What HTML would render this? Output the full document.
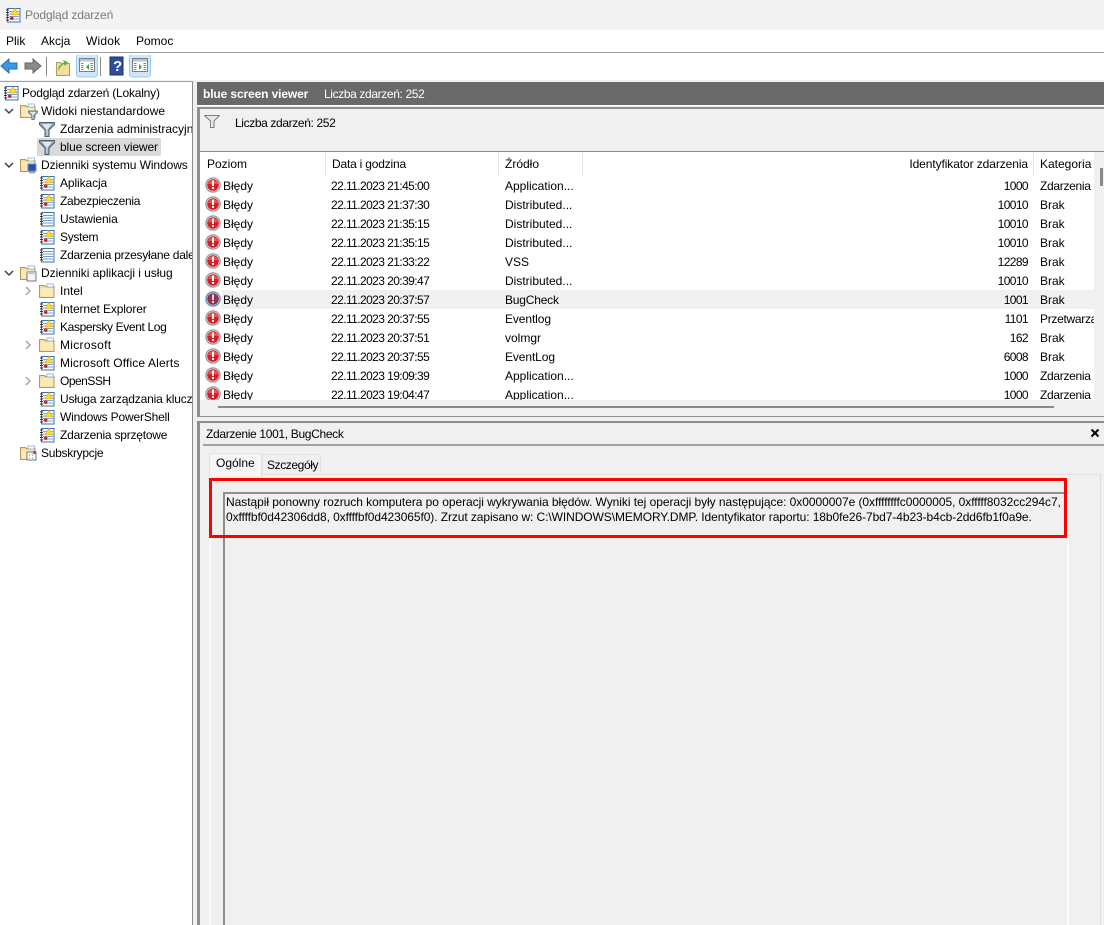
<!DOCTYPE html>
<html lang="pl"><head><meta charset="utf-8"><title>Podgląd zdarzeń</title>
<style>
html,body{margin:0;padding:0;background:#fff}
body{width:1104px;height:925px;position:relative;overflow:hidden;font:12px "Liberation Sans",sans-serif;color:#000}
.a{position:absolute}
.t{position:absolute;white-space:nowrap;line-height:16px;height:16px}
.r{text-align:right}
.d{letter-spacing:-.58px}
.n{letter-spacing:-.6px}
.z{letter-spacing:-.3px}
svg.i{position:absolute;width:16px;height:16px;overflow:visible}
.clip{position:absolute;overflow:hidden}
</style></head><body>
<svg width="0" height="0" style="position:absolute">
<defs>
<symbol id="log" viewBox="0 0 16 16"><rect x="2.500" y="1.500" width="12.500" height="13.500" fill="#fff" stroke="#3f6fae"/><path d="M4 4.500h10M4 7h10M4 9.500h10M4 12h10" stroke="#7ea6d4"/><path d="M1 3h3M1 5.500h3M1 8h3M1 10.500h3M1 13h3" stroke="#333"/><path d="M10 1l4 7H6z" fill="#f8d92e" stroke="#c9a020" stroke-width=".5"/><rect x="5" y="9.500" width="3.500" height="3.500" rx="1.700" fill="#c8242c"/></symbol>
<symbol id="logp" viewBox="0 0 16 16"><rect x="2.500" y="1.500" width="12.500" height="13.500" fill="#fff" stroke="#3f6fae"/><path d="M4 4.500h10M4 7h10M4 9.500h10M4 12h10" stroke="#6d9bd0"/><path d="M1 3h3M1 5.500h3M1 8h3M1 10.500h3M1 13h3" stroke="#333"/></symbol>
<symbol id="fold" viewBox="0 0 16 16"><path d="M.5 2.500h5l1 1h8.500v11H.5z" fill="#f6dd9c" stroke="#b3975a"/><path d="M8 1h6.500v3H8z" fill="#fff" stroke="#7ea6d4" stroke-width=".7"/><path d="M1.500 5h13v8.500h-13z" fill="#fbe9b7"/></symbol>
<symbol id="filt" viewBox="0 0 16 16"><path d="M.5 1.500h15v2L10 9v6.500H6V9L.5 3.500z" fill="#8fa5b5" stroke="#4d6272"/><path d="M3 3h10L8.500 8.500v6H7.500V8.500z" fill="#dfe8ee"/></symbol>
<symbol id="err" viewBox="0 0 16 16"><circle cx="8" cy="8" r="7.800" fill="#9c9c9c"/><circle cx="8" cy="8" r="6.400" fill="#e8e8e8"/><circle cx="8" cy="8" r="5.800" fill="#d61f28"/><path d="M3 7a5 3.800 0 0 1 10 0z" fill="#e9565c"/><rect x="7" y="3.500" width="2" height="5.500" fill="#fff"/><rect x="7" y="10" width="2" height="2" fill="#fff"/></symbol>
<symbol id="errs" viewBox="0 0 16 16"><circle cx="8" cy="8" r="7.800" fill="#6e93b8"/><circle cx="8" cy="8" r="6.400" fill="#c5d4e2"/><circle cx="8" cy="8" r="5.800" fill="#93344f"/><rect x="7" y="3.500" width="2" height="5.500" fill="#dcdce8"/><rect x="7" y="10" width="2" height="2" fill="#dcdce8"/></symbol>
<symbol id="gt" viewBox="0 0 10 10"><path d="M3 1l4 4-4 4" fill="none" stroke="#a6a6a6" stroke-width="1.500"/></symbol>
<symbol id="dn" viewBox="0 0 10 10"><path d="M1 3l4 4 4-4" fill="none" stroke="#404040" stroke-width="1.500"/></symbol>
<symbol id="win" viewBox="0 0 18 18"><rect x="1.500" y="2.500" width="15" height="13" fill="#fff" stroke="#708090"/><rect x="2" y="3" width="14" height="2.500" fill="#b8c6d4"/><path d="M3 7.500h2.500M3 9.500h2.500M3 11.500h2.500M3 13.500h2.500M12.500 7.500H15M12.500 9.500H15M12.500 11.500H15M12.500 13.500H15" stroke="#4a90d9"/></symbol>
</defs></svg>

<!-- title bar -->
<div class="a" style="left:0;top:0;width:1104px;height:30px;background:#f3f3f3"></div>
<svg class="i" style="left:5px;top:7px"><use href="#log"/></svg>
<div class="t" style="left:25px;top:7px;color:#7a7a7a;letter-spacing:-.13px">Podgląd zdarzeń</div>
<!-- menu -->
<div class="t" style="left:6px;top:33px">Plik</div>
<div class="t" style="left:41px;top:33px">Akcja</div>
<div class="t" style="left:86px;top:33px;letter-spacing:.2px">Widok</div>
<div class="t" style="left:136px;top:33px">Pomoc</div>
<div class="a" style="left:0;top:52px;width:1104px;height:1px;background:#a0a0a0"></div>
<!-- toolbar -->
<svg class="a" style="left:0;top:55px" width="190" height="24" viewBox="0 0 190 24">
<path d="M1 11l8-7v4h8v6H9v4z" fill="#3b9be0" stroke="#1f70b5"/>
<path d="M41 11l-8-7v4h-8v6h8v4z" fill="#8a8a8a" stroke="#666"/>
<path d="M46.500 2v19" stroke="#888"/>
<path d="M56.500 7.500h4l1 1h8v12h-13z" fill="#f5dc98" stroke="#b79a5a"/>
<path d="M58 16c0-5 3-7 6-8l-1-3 5 2-3 4-1-2c-2 1-4 3-6 7z" fill="#4fb83e"/>
<rect x="76.500" y="-1" width="21" height="23" rx="3" fill="#cfe6fb" stroke="#99ccf5"/>
<path d="M100.500 2v19" stroke="#888"/>
<rect x="110" y="2" width="13" height="18" fill="#2d4f9e" stroke="#1c2f66"/>
<rect x="129.500" y="-1" width="21" height="23" rx="3" fill="#cfe6fb" stroke="#99ccf5"/>
<text x="113" y="16" font-family="Liberation Sans" font-size="15" font-weight="bold" fill="#fff">?</text>
</svg>
<svg class="a" style="left:78px;top:56px" width="18" height="18"><use href="#win"/><path d="M8 9l3-3v6z" fill="#2fa84f" transform="translate(0 2)"/></svg>
<svg class="a" style="left:131px;top:56px" width="18" height="18"><use href="#win"/><path d="M11 9L8 6v6z" fill="#2fa84f" transform="translate(0 2)"/></svg>
<div class="a" style="left:0;top:80px;width:1104px;height:845px;background:#f0f0f0"></div>

<!-- left tree -->
<div class="a" style="left:0;top:82px;width:192px;height:843px;background:#fff"></div>
<div class="a" style="left:192px;top:82px;width:1px;height:843px;background:#8a8a8a"></div>
<div class="a" style="left:0;top:81px;width:193px;height:1px;background:#a0a0a0"></div>
<div class="a" style="left:37px;top:138px;width:124px;height:18px;background:#d9d9d9;border-radius:2px"></div>

<svg class="i" style="left:3px;top:85px"><use href="#log"/></svg><div class="t" style="left:22px;top:85px;letter-spacing:-.2px">Podgląd zdarzeń (Lokalny)</div>

<svg class="a" style="left:4px;top:106px" width="10" height="10"><use href="#dn"/></svg>
<svg class="i" style="left:20px;top:103px"><use href="#fold"/></svg>
<svg class="a" style="left:28px;top:110px" width="10" height="10"><use href="#filt"/></svg>
<div class="t" style="left:41px;top:103px">Widoki niestandardowe</div>

<svg class="i" style="left:39px;top:121px"><use href="#filt"/></svg>
<div class="clip" style="left:60px;top:121px;width:132px;height:16px"><div class="t" style="left:0;top:0">Zdarzenia administracyjne</div></div>
<svg class="i" style="left:39px;top:139px"><use href="#filt"/></svg>
<div class="t" style="left:60px;top:139px;letter-spacing:-.12px">blue screen viewer</div>

<svg class="a" style="left:4px;top:160px" width="10" height="10"><use href="#dn"/></svg>
<svg class="i" style="left:20px;top:157px"><use href="#fold"/></svg>
<svg class="a" style="left:27px;top:163px" width="10" height="11"><rect x="1" y="1" width="8" height="7" fill="#1e50c8" stroke="#888"/><rect x="2" y="9" width="6" height="1.500" fill="#aaa"/></svg>
<div class="t" style="left:41px;top:157px;letter-spacing:-.08px">Dzienniki systemu Windows</div>

<svg class="i" style="left:39px;top:175px"><use href="#log"/></svg><div class="t" style="left:60px;top:175px;letter-spacing:-.1px">Aplikacja</div>
<svg class="i" style="left:39px;top:193px"><use href="#log"/></svg><div class="t" style="left:60px;top:193px;letter-spacing:-.28px">Zabezpieczenia</div>
<svg class="i" style="left:39px;top:211px"><use href="#logp"/></svg><div class="t" style="left:60px;top:211px;letter-spacing:-.1px">Ustawienia</div>
<svg class="i" style="left:39px;top:229px"><use href="#log"/></svg><div class="t" style="left:60px;top:229px;letter-spacing:-.3px">System</div>
<svg class="i" style="left:39px;top:247px"><use href="#logp"/></svg><div class="clip" style="left:60px;top:247px;width:132px;height:16px"><div class="t" style="left:0;top:0;letter-spacing:-.25px">Zdarzenia przesyłane dalej</div></div>

<svg class="a" style="left:4px;top:268px" width="10" height="10"><use href="#dn"/></svg>
<svg class="i" style="left:20px;top:265px"><use href="#fold"/></svg>
<svg class="a" style="left:26px;top:271px" width="11" height="11"><rect x="1" y="1" width="9" height="9" fill="#f4f4f4" stroke="#777"/><rect x="1" y="1" width="9" height="2" fill="#b9c4cf"/></svg>
<div class="t" style="left:41px;top:265px;letter-spacing:-.04px">Dzienniki aplikacji i usług</div>

<svg class="a" style="left:23px;top:286px" width="10" height="10"><use href="#gt"/></svg>
<svg class="i" style="left:39px;top:283px"><use href="#fold"/></svg><div class="t" style="left:60px;top:283px">Intel</div>
<svg class="i" style="left:39px;top:301px"><use href="#log"/></svg><div class="t" style="left:60px;top:301px;letter-spacing:-.12px">Internet Explorer</div>
<svg class="i" style="left:39px;top:319px"><use href="#log"/></svg><div class="t" style="left:60px;top:319px;letter-spacing:-.37px">Kaspersky Event Log</div>
<svg class="a" style="left:23px;top:340px" width="10" height="10"><use href="#gt"/></svg>
<svg class="i" style="left:39px;top:337px"><use href="#fold"/></svg><div class="t" style="left:60px;top:337px;letter-spacing:.3px">Microsoft</div>
<svg class="i" style="left:39px;top:355px"><use href="#log"/></svg><div class="t" style="left:60px;top:355px;letter-spacing:.13px">Microsoft Office Alerts</div>
<svg class="a" style="left:23px;top:376px" width="10" height="10"><use href="#gt"/></svg>
<svg class="i" style="left:39px;top:373px"><use href="#fold"/></svg><div class="t" style="left:60px;top:373px;letter-spacing:-.5px">OpenSSH</div>
<svg class="i" style="left:39px;top:391px"><use href="#log"/></svg><div class="clip" style="left:60px;top:391px;width:132px;height:16px"><div class="t" style="left:0;top:0;letter-spacing:-.15px">Usługa zarządzania kluczami</div></div>
<svg class="i" style="left:39px;top:409px"><use href="#log"/></svg><div class="t" style="left:60px;top:409px;letter-spacing:-.17px">Windows PowerShell</div>
<svg class="i" style="left:39px;top:427px"><use href="#log"/></svg><div class="t" style="left:60px;top:427px;letter-spacing:-.22px">Zdarzenia sprzętowe</div>
<svg class="i" style="left:20px;top:445px"><use href="#fold"/></svg>
<svg class="a" style="left:26px;top:451px" width="11" height="10"><rect x="1" y="1" width="9" height="8" fill="#fff" stroke="#777"/><rect x="7" y="0" width="3" height="3" fill="#e0404a"/><path d="M3 4h1M6 4h1M3 7h1M6 7h1" stroke="#3c78c8"/></svg>
<div class="t" style="left:41px;top:445px;letter-spacing:-.28px">Subskrypcje</div>

<!-- top dark header -->
<div class="a" style="left:197px;top:82px;width:907px;height:23px;background:#696969"></div>
<div class="t" style="left:203px;top:86px;color:#fff;font-weight:bold;letter-spacing:-.12px">blue screen viewer</div>
<div class="t" style="left:324px;top:86px;color:#fff;letter-spacing:-.37px">Liczba zdarzeń: 252</div>
<div class="a" style="left:197px;top:105px;width:907px;height:1px;background:#fff"></div>
<div class="a" style="left:197px;top:107px;width:907px;height:2px;background:#8f8f8f"></div>

<!-- list pane borders -->
<div class="a" style="left:197px;top:107px;width:3px;height:309px;background:#8f8f8f"></div>
<svg class="a" style="left:204px;top:115px" width="16" height="13" viewBox="0 0 16 13"><path d="M.5 .5h15L10 6v6.500H6.500V6z" fill="#e9e9e9" stroke="#808080"/></svg>
<div class="t" style="left:235px;top:115px;letter-spacing:-.37px">Liczba zdarzeń: 252</div>
<div class="a" style="left:200px;top:151px;width:904px;height:1px;background:#8a8a8a"></div>

<!-- table -->
<div class="a" style="left:200px;top:152px;width:894px;height:248px;background:#fff"></div>
<div class="a" style="left:325px;top:152px;width:1px;height:24px;background:#e5e5e5"></div>
<div class="a" style="left:498px;top:152px;width:1px;height:24px;background:#e5e5e5"></div>
<div class="a" style="left:582px;top:152px;width:1px;height:24px;background:#e5e5e5"></div>
<div class="a" style="left:1033px;top:152px;width:1px;height:24px;background:#e5e5e5"></div>
<div class="t" style="left:207px;top:156px">Poziom</div>
<div class="t" style="left:332px;top:156px;letter-spacing:-.2px">Data i godzina</div>
<div class="t" style="left:505px;top:156px">Źródło</div>
<div class="t r" style="left:828px;width:200px;top:156px;letter-spacing:-.09px">Identyfikator zdarzenia</div>
<div class="t" style="left:1040px;top:156px">Kategoria</div>
<div class="a" style="left:1094px;top:152px;width:10px;height:249px;background:#f0f0f0"></div>
<div class="a" style="left:1100px;top:168px;width:3px;height:18px;background:#8a8a8a"></div>

<div class="clip" style="left:200px;top:176px;width:894px;height:224px">
<div class="a" style="left:21px;top:114px;width:873px;height:19px;background:#f0f0f0"></div>

<svg class="i" style="left:5px;top:1px"><use href="#err"/></svg><div class="t" style="left:23px;top:2px">Błędy</div><div class="t d" style="left:131px;top:2px">22.11.2023 21:45:00</div><div class="t" style="left:305px;top:2px">Application...</div><div class="t r n" style="left:728px;width:100px;top:2px">1000</div><div class="t z" style="left:840px;top:2px">Zdarzenia</div>
<svg class="i" style="left:5px;top:20px"><use href="#err"/></svg><div class="t" style="left:23px;top:21px">Błędy</div><div class="t d" style="left:131px;top:21px">22.11.2023 21:37:30</div><div class="t" style="left:305px;top:21px">Distributed...</div><div class="t r n" style="left:728px;width:100px;top:21px">10010</div><div class="t" style="left:840px;top:21px">Brak</div>
<svg class="i" style="left:5px;top:39px"><use href="#err"/></svg><div class="t" style="left:23px;top:40px">Błędy</div><div class="t d" style="left:131px;top:40px">22.11.2023 21:35:15</div><div class="t" style="left:305px;top:40px">Distributed...</div><div class="t r n" style="left:728px;width:100px;top:40px">10010</div><div class="t" style="left:840px;top:40px">Brak</div>
<svg class="i" style="left:5px;top:58px"><use href="#err"/></svg><div class="t" style="left:23px;top:59px">Błędy</div><div class="t d" style="left:131px;top:59px">22.11.2023 21:35:15</div><div class="t" style="left:305px;top:59px">Distributed...</div><div class="t r n" style="left:728px;width:100px;top:59px">10010</div><div class="t" style="left:840px;top:59px">Brak</div>
<svg class="i" style="left:5px;top:77px"><use href="#err"/></svg><div class="t" style="left:23px;top:78px">Błędy</div><div class="t d" style="left:131px;top:78px">22.11.2023 21:33:22</div><div class="t" style="left:305px;top:78px">VSS</div><div class="t r n" style="left:728px;width:100px;top:78px">12289</div><div class="t" style="left:840px;top:78px">Brak</div>
<svg class="i" style="left:5px;top:96px"><use href="#err"/></svg><div class="t" style="left:23px;top:97px">Błędy</div><div class="t d" style="left:131px;top:97px">22.11.2023 20:39:47</div><div class="t" style="left:305px;top:97px">Distributed...</div><div class="t r n" style="left:728px;width:100px;top:97px">10010</div><div class="t" style="left:840px;top:97px">Brak</div>
<svg class="i" style="left:5px;top:115px"><use href="#errs"/></svg><div class="t" style="left:23px;top:116px">Błędy</div><div class="t d" style="left:131px;top:116px">22.11.2023 20:37:57</div><div class="t" style="left:305px;top:116px;letter-spacing:-.2px">BugCheck</div><div class="t r n" style="left:728px;width:100px;top:116px">1001</div><div class="t" style="left:840px;top:116px">Brak</div>
<svg class="i" style="left:5px;top:134px"><use href="#err"/></svg><div class="t" style="left:23px;top:135px">Błędy</div><div class="t d" style="left:131px;top:135px">22.11.2023 20:37:55</div><div class="t" style="left:305px;top:135px;letter-spacing:-.1px">Eventlog</div><div class="t r n" style="left:728px;width:100px;top:135px">1101</div><div class="t z" style="left:840px;top:135px">Przetwarzanie</div>
<svg class="i" style="left:5px;top:153px"><use href="#err"/></svg><div class="t" style="left:23px;top:154px">Błędy</div><div class="t d" style="left:131px;top:154px">22.11.2023 20:37:51</div><div class="t" style="left:305px;top:154px">volmgr</div><div class="t r n" style="left:728px;width:100px;top:154px">162</div><div class="t" style="left:840px;top:154px">Brak</div>
<svg class="i" style="left:5px;top:172px"><use href="#err"/></svg><div class="t" style="left:23px;top:173px">Błędy</div><div class="t d" style="left:131px;top:173px">22.11.2023 20:37:55</div><div class="t" style="left:305px;top:173px;letter-spacing:-.1px">EventLog</div><div class="t r n" style="left:728px;width:100px;top:173px">6008</div><div class="t" style="left:840px;top:173px">Brak</div>
<svg class="i" style="left:5px;top:191px"><use href="#err"/></svg><div class="t" style="left:23px;top:192px">Błędy</div><div class="t d" style="left:131px;top:192px">22.11.2023 19:09:39</div><div class="t" style="left:305px;top:192px">Application...</div><div class="t r n" style="left:728px;width:100px;top:192px">1000</div><div class="t z" style="left:840px;top:192px">Zdarzenia</div>
<svg class="i" style="left:5px;top:210px"><use href="#err"/></svg><div class="t" style="left:23px;top:211px">Błędy</div><div class="t d" style="left:131px;top:211px">22.11.2023 19:04:47</div><div class="t" style="left:305px;top:211px">Application...</div><div class="t r n" style="left:728px;width:100px;top:211px">1000</div><div class="t z" style="left:840px;top:211px">Zdarzenia</div>
</div>

<div class="a" style="left:218px;top:406px;width:836px;height:2px;background:#8a8a8a"></div>
<div class="a" style="left:197px;top:416px;width:907px;height:1px;background:#8f8f8f"></div>

<!-- detail pane -->
<div class="a" style="left:197px;top:421px;width:907px;height:2px;background:#8f8f8f"></div>
<div class="a" style="left:197px;top:421px;width:3px;height:504px;background:#8f8f8f"></div>
<div class="t" style="left:206px;top:426px;letter-spacing:-.33px">Zdarzenie 1001, BugCheck</div>
<svg class="a" style="left:1090px;top:428px" width="10" height="10" viewBox="0 0 10 10"><path d="M1.500 1.500l7 7M8.500 1.500l-7 7" stroke="#000" stroke-width="2"/></svg>
<div class="a" style="left:203px;top:444px;width:901px;height:2px;background:#a0a0a0"></div>

<!-- tabs -->
<div class="a" style="left:209px;top:474px;width:892px;height:1px;background:#e3e3e3"></div>
<div class="a" style="left:209px;top:475px;width:2px;height:450px;background:#fafafa"></div>
<div class="a" style="left:1100px;top:475px;width:1px;height:450px;background:#dedede"></div>
<div class="a" style="left:262px;top:454px;width:59px;height:20px;background:#f0f0f0;border:1px solid #e3e3e3;border-bottom:0;box-sizing:border-box"></div>
<div class="a" style="left:209px;top:453px;width:53px;height:23px;background:#f5f5f5;border:1px solid #e3e3e3;border-bottom:0;box-sizing:border-box"></div>
<div class="t" style="left:216px;top:455px">Ogólne</div>
<div class="t" style="left:267px;top:457px;letter-spacing:-.4px">Szczegóły</div>

<!-- message box -->
<div class="a" style="left:223px;top:492px;width:845px;height:2px;background:#8f8f8f"></div>
<div class="a" style="left:223px;top:492px;width:2px;height:433px;background:#8f8f8f"></div>
<div class="a" style="left:1067px;top:492px;width:2px;height:433px;background:#fafafa"></div>
<div class="t" style="left:226px;top:494px;letter-spacing:-.05px">Nastąpił ponowny rozruch komputera po operacji wykrywania błędów. Wyniki tej operacji były następujące: 0x0000007e (0xffffffffc0000005, 0xfffff8032cc294c7,</div>
<div class="t" style="left:226px;top:509px;letter-spacing:-.085px">0xffffbf0d42306dd8, 0xffffbf0d423065f0). Zrzut zapisano w: C:\WINDOWS\MEMORY.DMP. Identyfikator raportu: 18b0fe26-7bd7-4b23-b4cb-2dd6fb1f0a9e.</div>
<div class="a" style="left:209px;top:478px;width:858px;height:60px;box-sizing:border-box;border:3px solid #ff0000"></div>
</body></html>
